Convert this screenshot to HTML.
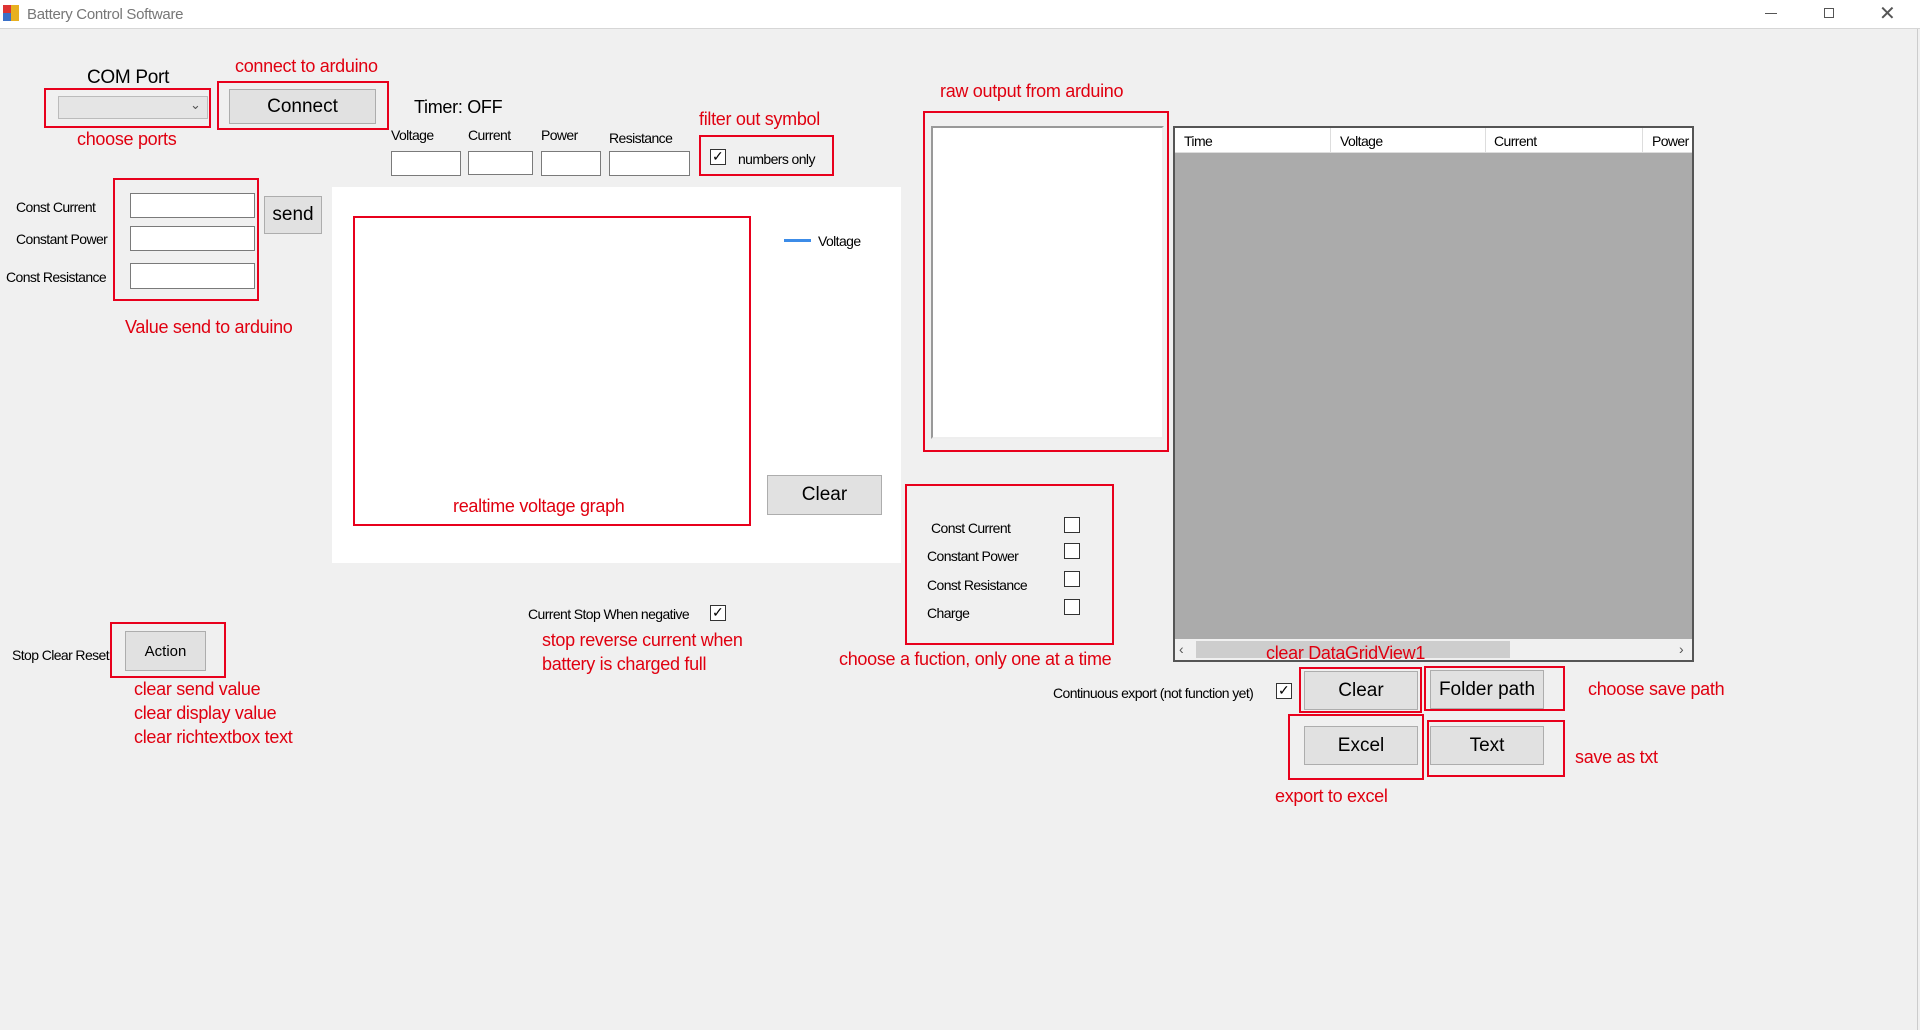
<!DOCTYPE html>
<html><head><meta charset="utf-8"><style>
body{margin:0;width:1920px;height:1030px;background:#f0f0f0;position:relative;overflow:hidden;font-family:"Liberation Sans",sans-serif;}
div{position:absolute;box-sizing:border-box;}
.t{white-space:nowrap;color:#000;font-size:14px;letter-spacing:-0.6px;line-height:1;}
.r{white-space:nowrap;color:#e00010;font-size:18px;line-height:1;letter-spacing:-0.3px;}
.rb{border:2px solid #e8001c;}
.inp{background:#fff;border:1px solid #7a7a7a;}
.btn{background:#e1e1e1;border:1px solid #adadad;font-size:19px;display:flex;align-items:center;justify-content:center;color:#000;}
.cb{background:#fff;border:1px solid #333;width:16px;height:16px;}
</style></head><body>
<div style="left:0;top:0;width:1920px;height:29px;background:#fff;border-bottom:1px solid #d6d6d6"></div>
<div style="left:3px;top:5px;width:8px;height:8px;background:#d33"></div>
<div style="left:11px;top:5px;width:8px;height:8px;background:#e8b020"></div>
<div style="left:3px;top:13px;width:8px;height:8px;background:#3a70c8"></div>
<div style="left:11px;top:13px;width:8px;height:8px;background:#e8b020"></div>
<div class="t" style="left:27px;top:7px;font-size:15px;color:#777;letter-spacing:-0.3px">Battery Control Software</div>
<div style="left:1765px;top:13px;width:12px;height:1px;background:#555"></div>
<div style="left:1824px;top:8px;width:10px;height:10px;border:1px solid #555"></div>
<div class="t" style="left:1879px;top:4px;font-size:20px;color:#555">✕</div>
<div style="left:1917px;top:29px;width:1px;height:1001px;background:#ccc"></div>

<div class="t" style="left:87px;top:68px;font-size:19px;letter-spacing:-0.3px">COM Port</div>
<div class="rb" style="left:44px;top:88px;width:167px;height:40px"></div>
<div style="left:58px;top:96px;width:150px;height:23px;background:#e5e5e5;border:1px solid #bbb"></div>
<div class="t" style="left:190px;top:98px;font-size:13px;color:#555">⌄</div>
<div class="r" style="left:77px;top:130px">choose ports</div>
<div class="r" style="left:235px;top:57px">connect to arduino</div>
<div class="rb" style="left:217px;top:81px;width:172px;height:49px"></div>
<div class="btn" style="left:229px;top:89px;width:147px;height:35px">Connect</div>
<div class="t" style="left:414px;top:98px;font-size:18px;letter-spacing:-0.3px">Timer: OFF</div>
<div class="t" style="left:391px;top:128px">Voltage</div>
<div class="t" style="left:468px;top:128px">Current</div>
<div class="t" style="left:541px;top:128px">Power</div>
<div class="t" style="left:609px;top:131px">Resistance</div>
<div class="inp" style="left:391px;top:151px;width:70px;height:25px"></div>
<div class="inp" style="left:468px;top:151px;width:65px;height:24px"></div>
<div class="inp" style="left:541px;top:151px;width:60px;height:25px"></div>
<div class="inp" style="left:609px;top:151px;width:81px;height:25px"></div>
<div class="r" style="left:699px;top:110px">filter out symbol</div>
<div class="rb" style="left:699px;top:135px;width:135px;height:41px"></div>
<div class="cb" style="left:710px;top:149px"></div>
<div class="t" style="left:712px;top:149px;font-size:14px">✓</div>
<div class="t" style="left:738px;top:152px">numbers only</div>

<div class="t" style="left:16px;top:200px">Const Current</div>
<div class="t" style="left:16px;top:232px">Constant Power</div>
<div class="t" style="left:6px;top:270px">Const Resistance</div>
<div class="rb" style="left:113px;top:178px;width:146px;height:123px"></div>
<div class="inp" style="left:130px;top:193px;width:125px;height:25px"></div>
<div class="inp" style="left:130px;top:226px;width:125px;height:25px"></div>
<div class="inp" style="left:130px;top:263px;width:125px;height:26px"></div>
<div class="btn" style="left:264px;top:196px;width:58px;height:38px">send</div>
<div class="r" style="left:125px;top:318px">Value send to arduino</div>

<div style="left:332px;top:187px;width:569px;height:376px;background:#fff"></div>
<div class="rb" style="left:353px;top:216px;width:398px;height:310px"></div>
<div class="r" style="left:453px;top:497px">realtime voltage graph</div>
<div style="left:784px;top:239px;width:27px;height:3px;background:#3c8ce8"></div>
<div class="t" style="left:818px;top:234px">Voltage</div>
<div class="btn" style="left:767px;top:475px;width:115px;height:40px">Clear</div>

<div class="r" style="left:940px;top:82px">raw output from arduino</div>
<div class="rb" style="left:923px;top:111px;width:246px;height:341px"></div>
<div style="left:931px;top:126px;width:233px;height:313px;background:#fff;border:2px solid #999;border-right-color:#eee;border-bottom-color:#eee"></div>

<div style="left:1173px;top:126px;width:521px;height:536px;background:#ababab;border:2px solid #555"></div>
<div style="left:1175px;top:128px;width:517px;height:25px;background:#fff;border-bottom:1px solid #ddd"></div>
<div style="left:1330px;top:128px;width:1px;height:25px;background:#ddd"></div>
<div style="left:1485px;top:128px;width:1px;height:25px;background:#ddd"></div>
<div style="left:1642px;top:128px;width:1px;height:25px;background:#ddd"></div>
<div class="t" style="left:1184px;top:134px">Time</div>
<div class="t" style="left:1340px;top:134px">Voltage</div>
<div class="t" style="left:1494px;top:134px">Current</div>
<div class="t" style="left:1652px;top:134px">Power</div>
<div style="left:1175px;top:639px;width:517px;height:21px;background:#f0f0f0"></div>
<div style="left:1196px;top:641px;width:314px;height:17px;background:#cdcdcd"></div>
<div class="t" style="left:1179px;top:642px;color:#555">‹</div>
<div class="t" style="left:1679px;top:642px;color:#555">›</div>
<div class="r" style="left:1266px;top:644px">clear DataGridView1</div>

<div class="rb" style="left:905px;top:484px;width:209px;height:161px"></div>
<div class="t" style="left:931px;top:521px">Const Current</div>
<div class="t" style="left:927px;top:549px">Constant Power</div>
<div class="t" style="left:927px;top:578px">Const Resistance</div>
<div class="t" style="left:927px;top:606px">Charge</div>
<div class="cb" style="left:1064px;top:517px"></div>
<div class="cb" style="left:1064px;top:543px"></div>
<div class="cb" style="left:1064px;top:571px"></div>
<div class="cb" style="left:1064px;top:599px"></div>
<div class="r" style="left:839px;top:650px">choose a fuction, only one at a time</div>

<div class="t" style="left:528px;top:607px">Current Stop When negative</div>
<div class="cb" style="left:710px;top:605px"></div>
<div class="t" style="left:712px;top:605px">✓</div>
<div class="r" style="left:542px;top:631px">stop reverse current when</div>
<div class="r" style="left:542px;top:655px">battery is charged full</div>

<div class="t" style="left:12px;top:648px">Stop Clear Reset</div>
<div class="rb" style="left:110px;top:622px;width:116px;height:56px"></div>
<div class="btn" style="left:125px;top:631px;width:81px;height:40px;font-size:15px">Action</div>
<div class="r" style="left:134px;top:680px">clear send value</div>
<div class="r" style="left:134px;top:704px">clear display value</div>
<div class="r" style="left:134px;top:728px">clear richtextbox text</div>

<div class="t" style="left:1053px;top:686px">Continuous export (not function yet)</div>
<div class="cb" style="left:1276px;top:683px"></div>
<div class="t" style="left:1278px;top:683px">✓</div>
<div class="btn" style="left:1304px;top:671px;width:114px;height:39px">Clear</div>
<div class="rb" style="left:1299px;top:667px;width:123px;height:46px"></div>
<div class="btn" style="left:1430px;top:670px;width:114px;height:39px">Folder path</div>
<div class="rb" style="left:1424px;top:666px;width:141px;height:45px"></div>
<div class="r" style="left:1588px;top:680px">choose save path</div>
<div class="btn" style="left:1304px;top:726px;width:114px;height:39px">Excel</div>
<div class="rb" style="left:1288px;top:714px;width:136px;height:66px"></div>
<div class="btn" style="left:1430px;top:726px;width:114px;height:39px">Text</div>
<div class="rb" style="left:1427px;top:720px;width:138px;height:57px"></div>
<div class="r" style="left:1575px;top:748px">save as txt</div>
<div class="r" style="left:1275px;top:787px">export to excel</div>
</body></html>
